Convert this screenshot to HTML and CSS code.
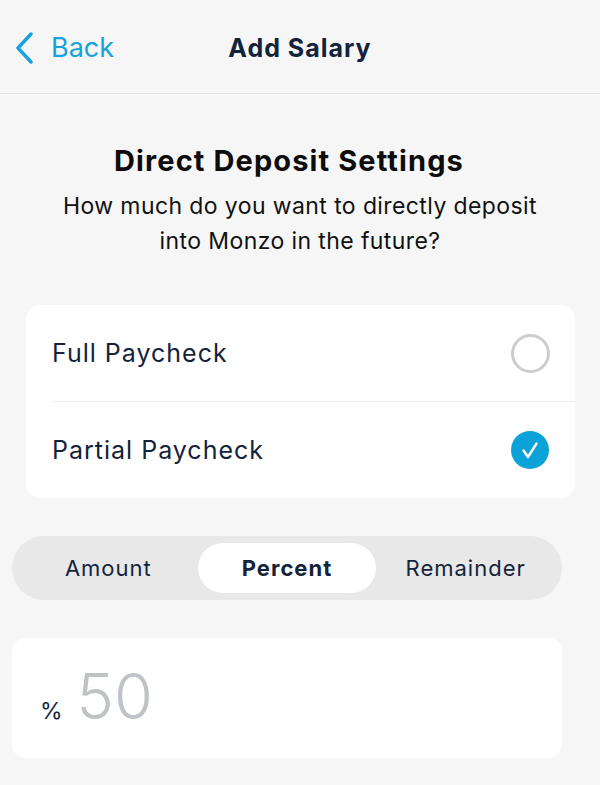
FILE: index.html
```html
<!DOCTYPE html>
<html lang="en">
<head>
    <meta charset="UTF-8">
    <meta name="viewport" content="width=device-width, initial-scale=1.0">
    <title>Add Salary</title>
    <link rel="stylesheet" href="styles.css">
</head>
<body>

    <header class="topbar">
        <a class="back" href="#">
            <svg class="back-icon" width="20" height="32" viewBox="0 0 20 32">
                <path d="M17 2 L4 16 L17 30" fill="none" stroke="#16a2db" stroke-width="3.4" stroke-linecap="round" stroke-linejoin="round"/>
            </svg>
            <span>Back</span>
        </a>
        <h2 class="topbar-title">Add Salary</h2>
        <span></span>
    </header>

    <main class="content">
        <section class="intro">
            <h1>Direct Deposit Settings</h1>
            <p>How much do you want to directly deposit<br>into Monzo in the future?</p>
        </section>

        <div class="options">
            <label class="option">
                <span>Full Paycheck</span>
                <span class="radio"></span>
            </label>
            <label class="option">
                <span>Partial Paycheck</span>
                <span class="radio checked">
                    <svg width="38" height="38" viewBox="0 0 38 38">
                        <path d="M12.5 19.5 L17 26 L25.5 12.5" fill="none" stroke="#fff" stroke-width="2.4" stroke-linecap="round" stroke-linejoin="round"/>
                    </svg>
                </span>
            </label>
        </div>

        <div class="segments">
            <button class="segment">Amount</button>
            <button class="segment active">Percent</button>
            <button class="segment">Remainder</button>
        </div>

        <div class="amount-box">
            <span class="unit">%</span>
            <span class="value">50</span>
        </div>
    </main>

</body>
</html>
```

FILE: styles.css
```css
/* Base */
body {
    margin: 0;
    background: #f6f6f6;
    color: #14233c;
    font-family: 'Inter', 'Noto Sans', sans-serif;
}

/* Top bar */
.topbar {
    display: grid;
    grid-template-columns: 1fr auto 1fr;
    align-items: center;
    height: 94px;
    padding: 0 14px;
    border-bottom: 1px solid #e4e4e4;
    box-sizing: border-box;
}

.back {
    display: flex;
    align-items: center;
    gap: 17px;
    color: #16a2db;
    text-decoration: none;
    font-size: 27px;
    padding-top: 2px;
}

.topbar-title {
    margin: 0;
    padding-top: 3px;
    font-size: 25px;
    font-weight: 700;
    letter-spacing: 1px;
    color: #14233c;
}

/* Intro text */
.intro {
    text-align: center;
    padding-top: 47px;
}

.intro h1 {
    margin: 0 22px 0 0;
    font-size: 29px;
    font-weight: 700;
    letter-spacing: 1.1px;
    color: #0d0d0d;
    line-height: 40px;
}

.intro p {
    margin: 8px 0 0;
    font-size: 23px;
    line-height: 35px;
    letter-spacing: 0.4px;
    color: #111;
}

/* Paycheck options */
.options {
    margin: 46px 25px 0 26px;
    background: #fff;
    border-radius: 14px;
    padding-left: 26px;
}

.option {
    display: flex;
    align-items: center;
    justify-content: space-between;
    height: 96px;
    padding-right: 25px;
    font-size: 25px;
    letter-spacing: 1px;
}

.option + .option {
    border-top: 1px solid #ececec;
}

.radio {
    width: 39px;
    height: 39px;
    box-sizing: border-box;
    border-radius: 50%;
    border: 3px solid #cdcdd0;
}

.radio.checked {
    width: 38px;
    height: 38px;
    border: none;
    background: #0aa2d9;
    margin-right: 1px;
}

.radio svg {
    display: block;
}

/* Segmented control */
.segments {
    display: grid;
    grid-template-columns: 1fr 1fr 1fr;
    margin: 38px 38px 0 12px;
    padding: 7px;
    height: 50px;
    background: #e8e8e8;
    border-radius: 32px;
}

.segment {
    border: none;
    background: none;
    font-family: inherit;
    font-size: 22px;
    letter-spacing: 1px;
    color: #14233c;
    border-radius: 25px;
    padding: 0;
    cursor: pointer;
}

.segment.active {
    background: #fff;
    font-weight: 700;
}

/* Amount input */
.amount-box {
    display: flex;
    align-items: baseline;
    gap: 14px;
    margin: 38px 38px 0 12px;
    height: 120px;
    padding: 0 28px;
    box-sizing: border-box;
    background: #fff;
    border-radius: 14px;
    line-height: 116px;
}

.unit {
    font-size: 23px;
}

.value {
    font-size: 63px;
    font-weight: 300;
    color: #bfc3c8;
}
```
